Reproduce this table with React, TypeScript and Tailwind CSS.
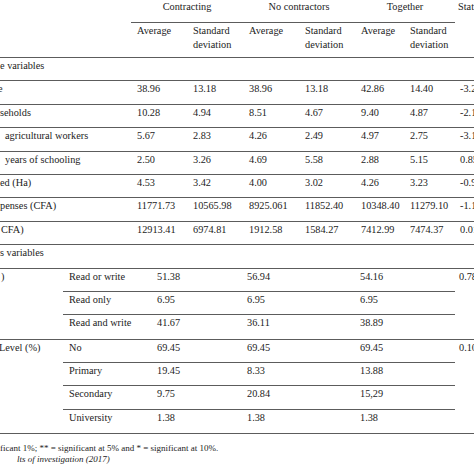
const line = "border-[#5c5c5c]";
const grid = "grid grid-cols-[131px_56px_56px_56px_56px_50px_50px_60px]";

type QuantRow = { label: string; pad?: string; values: string[] };

const quantRows: QuantRow[] = [
  { label: "e", pad: "-ml-[2px]", values: ["38.96", "13.18", "38.96", "13.18", "42.86", "14.40", "-3.21"] },
  { label: "seholds", values: ["10.28", "4.94", "8.51", "4.67", "9.40", "4.87", "-2.15"] },
  { label: "agricultural workers", pad: "pl-[5px]", values: ["5.67", "2.83", "4.26", "2.49", "4.97", "2.75", "-3.14"] },
  { label: "years of schooling", pad: "pl-[5px]", values: ["2.50", "3.26", "4.69", "5.58", "2.88", "5.15", "0.85"] },
  { label: "ed (Ha)", values: ["4.53", "3.42", "4.00", "3.02", "4.26", "3.23", "-0.97"] },
  { label: "penses (CFA)", values: ["11771.73", "10565.98", "8925.061", "11852.40", "10348.40", "11279.10", "-1.12"] },
  { label: "CFA)", pad: "pl-px", values: ["12913.41", "6974.81", "1912.58", "1584.27", "7412.99", "7474.37", "0.01"] },
];

const cellPad = ["pl-[6px]", "pl-[6px]", "pl-[6px]", "pl-[6px]", "pl-[6px]", "pl-[5px]", "pl-[5px]"];

type Group = { label: string; pad?: string; stat: string; rows: string[][] };

const groups: Group[] = [
  {
    label: ")",
    pad: "pl-px",
    stat: "0.78",
    rows: [
      ["Read or write", "51.38", "56.94", "54.16"],
      ["Read only", "6.95", "6.95", "6.95"],
      ["Read and write", "41.67", "36.11", "38.89"],
    ],
  },
  {
    label: "Level (%)",
    pad: "-ml-px",
    stat: "0.10",
    rows: [
      ["No", "69.45", "69.45", "69.45"],
      ["Primary", "19.45", "8.33", "13.88"],
      ["Secondary", "9.75", "20.84", "15,29"],
      ["University", "1.38", "1.38", "1.38"],
    ],
  },
];

function SectionRow({ text }: { text: string }) {
  return (
    <div className={`h-[23.4px] border-b ${line} pt-[1px]`}>
      <span>{text}</span>
    </div>
  );
}

function GroupBlock({ group }: { group: Group }) {
  return (
    <div className={`flex border-b ${line}`}>
      <div className="w-[63px] shrink-0 pt-[1px]">
        <span className={`block ${group.pad ?? ""}`}>{group.label}</span>
      </div>
      <div className="w-[392px] shrink-0">
        {group.rows.map((r, i) => (
          <div
            key={r[0]}
            className={`flex h-[23.4px] pt-[1px] ${i < group.rows.length - 1 ? `border-b ${line}` : "h-[22.4px]"}`}
          >
            <div className="w-[88px] pl-[6px]">{r[0]}</div>
            <div className="w-[92px] pl-[6px]">{r[1]}</div>
            <div className="w-[112px] pl-[4px]">{r[2]}</div>
            <div className="w-[100px] pl-[5px]">{r[3]}</div>
          </div>
        ))}
      </div>
      <div className="pl-[4px] pt-[1px]">{group.stat}</div>
    </div>
  );
}

export default function App() {
  return (
    <div className="h-[474px] w-[474px] overflow-hidden bg-white font-['Liberation_Serif',serif] text-[10.3px] leading-[14px] text-[#1c1c1c] whitespace-nowrap">
      <div className="w-[534px]">
        {/* column groups */}
        <div className={`${grid} h-[23px]`}>
          <div />
          <div className={`col-span-2 border-b ${line} text-center`}>Contracting</div>
          <div className={`col-span-2 border-b ${line} text-center`}>No contractors</div>
          <div className={`col-span-2 border-b ${line} text-center`}>Together</div>
          <div className="pl-[3px]">Statistic t</div>
        </div>
        <div className={`${grid} h-[35px] border-b ${line} pt-[1px]`}>
          <div />
          {["Average", "Standard deviation", "Average", "Standard deviation", "Average", "Standard deviation"].map(
            (h, i) => (
              <div key={i} className={`${cellPad[i]} whitespace-normal pr-1`}>
                {h}
              </div>
            )
          )}
          <div />
        </div>

        <SectionRow text="e variables" />
        {quantRows.map((r) => (
          <div key={r.label} className={`${grid} h-[23.4px] border-b ${line} pt-[1px]`}>
            <div className="overflow-hidden">
              <span className={`block ${r.pad ?? ""}`}>{r.label}</span>
            </div>
            {r.values.map((v, i) => (
              <div key={i} className={cellPad[i]}>
                {v}
              </div>
            ))}
          </div>
        ))}

        <SectionRow text="s variables" />
        {groups.map((g) => (
          <GroupBlock key={g.label} group={g} />
        ))}

        <div className="pt-[9px] text-[9px] leading-[11px]">
          <div>ficant 1%; ** = significant at 5% and * = significant at 10%.</div>
          <div className="pl-[17px] italic">lts of investigation (2017)</div>
        </div>
      </div>
    </div>
  );
}
